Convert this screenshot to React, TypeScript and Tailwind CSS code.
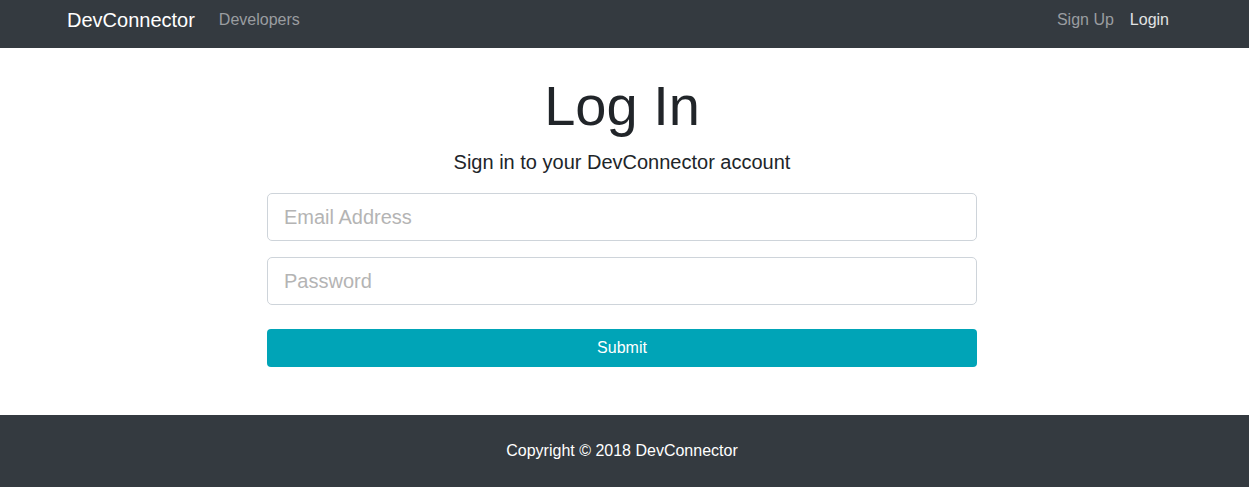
import React from "react";

function Navbar() {
  return (
    <nav className="h-[48px] bg-[#343a40]">
      <div className="mx-auto flex w-[1140px] items-start px-[15px]">
        <a href="#" className="mr-4 mt-[5px] text-[20px] leading-[30px] text-white">
          DevConnector
        </a>
        <a href="#" className="mt-[8px] px-2 text-[16px] leading-6 text-[#9a9da0]">
          Developers
        </a>
        <div className="ml-auto mt-[8px] flex">
          <a href="#" className="px-2 text-[16px] leading-6 text-[#9a9da0]">
            Sign Up
          </a>
          <a href="#" className="px-2 text-[16px] leading-6 text-[#e2e3e4]">
            Login
          </a>
        </div>
      </div>
    </nav>
  );
}

function Login() {
  return (
    <div className="mx-auto w-[710px] pt-6">
      <h1 className="mb-2 text-center text-[56px] font-normal leading-[1.2] text-[#212529]">
        Log In
      </h1>
      <p className="mb-4 text-center text-[20px] leading-[30px] text-[#212529]">
        Sign in to your DevConnector account
      </p>
      <form onSubmit={(e) => e.preventDefault()}>
        <div className="mb-4">
          <input
            type="email"
            placeholder="Email Address"
            className="block h-[48px] w-full rounded-[5px] border border-[#ced4da] px-4 text-[20px] text-[#495057] outline-none placeholder:text-[#b4b4b4]"
          />
        </div>
        <div className="mb-4">
          <input
            type="password"
            placeholder="Password"
            className="block h-[48px] w-full rounded-[5px] border border-[#ced4da] px-4 text-[20px] text-[#495057] outline-none placeholder:text-[#b4b4b4]"
          />
        </div>
        <button
          type="submit"
          className="mt-6 block h-[38px] w-full rounded-[4px] bg-[#00a4b7] text-[16px] text-white"
        >
          Submit
        </button>
      </form>
    </div>
  );
}

export default function App() {
  return (
    <div className="min-h-[489px] bg-white font-['Liberation_Sans',Arial,sans-serif]">
      <div className="pr-[5px] bg-[#343a40]">
        <Navbar />
      </div>
      <div className="pr-[5px]">
        <Login />
      </div>
      <footer className="mt-12 bg-[#343a40] pr-[5px] py-6 text-center text-[16px] leading-6 text-white">
        Copyright &copy; 2018 DevConnector
      </footer>
    </div>
  );
}
